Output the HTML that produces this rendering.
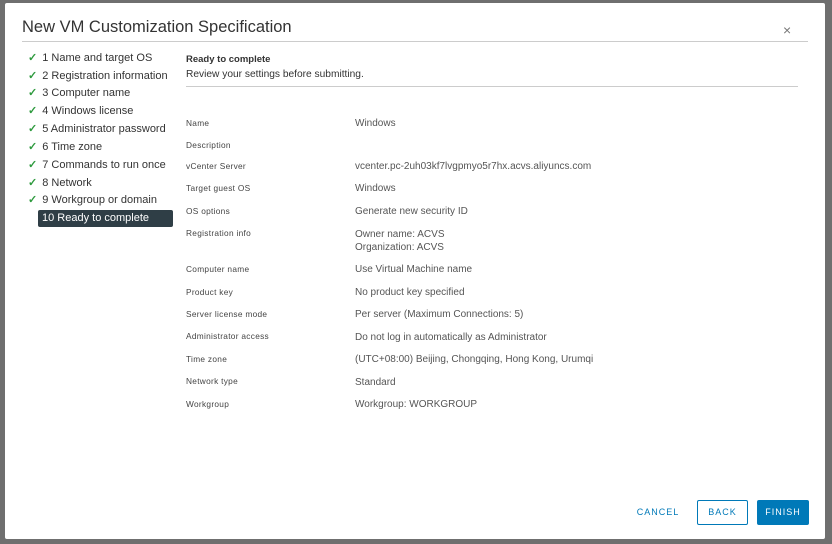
<!DOCTYPE html>
<html><head><style>
*{margin:0;padding:0;box-sizing:border-box}
body{width:832px;height:544px;background:#6f6f6f;font-family:"Liberation Sans",sans-serif;position:relative;overflow:hidden}
#d{position:absolute;left:5px;top:3px;width:820px;height:536px;background:#fff;border-radius:2px}
.a{position:absolute;white-space:nowrap}
.t{left:22px;top:18px;font-size:16.5px;color:#333}
.s{left:28px;font-size:11px;color:#333;line-height:14px}
.s b{color:#2e9a3e;font-weight:bold;margin-right:5px}
.l{left:186px;font-size:8.3px;letter-spacing:.3px;color:#444;line-height:10px}
.v{left:355px;font-size:10px;color:#555;line-height:13px}
.btn{position:absolute;top:500px;height:25px;font-size:9px;letter-spacing:1px;text-align:center;line-height:25px;border-radius:2px}
</style></head><body>
<div id="d"></div>
<div class="a t">New VM Customization Specification</div>
<div class="a" style="left:22px;top:41px;width:786px;height:1px;background:#ccc"></div>
<div class="a" style="left:783px;top:22px;font-size:14px;color:#777">×</div>
<div class="a" style="left:38px;top:210px;width:135px;height:17px;background:#2f3e46;border-radius:2px"></div>
<div class="a s" style="top:51px"><b>✓</b>1 Name and target OS</div>
<div class="a s" style="top:69px"><b>✓</b>2 Registration information</div>
<div class="a s" style="top:86px"><b>✓</b>3 Computer name</div>
<div class="a s" style="top:104px"><b>✓</b>4 Windows license</div>
<div class="a s" style="top:122px"><b>✓</b>5 Administrator password</div>
<div class="a s" style="top:140px"><b>✓</b>6 Time zone</div>
<div class="a s" style="top:158px"><b>✓</b>7 Commands to run once</div>
<div class="a s" style="top:176px"><b>✓</b>8 Network</div>
<div class="a s" style="top:193px"><b>✓</b>9 Workgroup or domain</div>
<div class="a s" style="top:211px;left:42px;color:#fff">10 Ready to complete</div>
<div class="a" style="left:186px;top:54px;font-size:9.5px;font-weight:bold;color:#333">Ready to complete</div>
<div class="a" style="left:186px;top:69px;font-size:10.2px;color:#333">Review your settings before submitting.</div>
<div class="a" style="left:186px;top:86px;width:612px;height:1px;background:#ccc"></div>
<div class="a l" style="top:118px">Name</div><div class="a v" style="top:117px">Windows</div>
<div class="a l" style="top:140px">Description</div>
<div class="a l" style="top:161px">vCenter Server</div><div class="a v" style="top:160px">vcenter.pc-2uh03kf7lvgpmyo5r7hx.acvs.aliyuncs.com</div>
<div class="a l" style="top:183px">Target guest OS</div><div class="a v" style="top:182px">Windows</div>
<div class="a l" style="top:206px">OS options</div><div class="a v" style="top:205px">Generate new security ID</div>
<div class="a l" style="top:228px">Registration info</div><div class="a v" style="top:228px">Owner name: ACVS<br>Organization: ACVS</div>
<div class="a l" style="top:264px">Computer name</div><div class="a v" style="top:263px">Use Virtual Machine name</div>
<div class="a l" style="top:287px">Product key</div><div class="a v" style="top:286px">No product key specified</div>
<div class="a l" style="top:309px">Server license mode</div><div class="a v" style="top:308px">Per server (Maximum Connections: 5)</div>
<div class="a l" style="top:331px">Administrator access</div><div class="a v" style="top:331px">Do not log in automatically as Administrator</div>
<div class="a l" style="top:354px">Time zone</div><div class="a v" style="top:353px">(UTC+08:00) Beijing, Chongqing, Hong Kong, Urumqi</div>
<div class="a l" style="top:376px">Network type</div><div class="a v" style="top:376px">Standard</div>
<div class="a l" style="top:399px">Workgroup</div><div class="a v" style="top:398px">Workgroup: WORKGROUP</div>
<div class="btn" style="left:630px;width:56px;color:#0079b8">CANCEL</div>
<div class="btn" style="left:697px;width:51px;border:1px solid #0079b8;color:#0079b8;line-height:23px">BACK</div>
<div class="btn" style="left:757px;width:52px;background:#0079b8;color:#fff">FINISH</div>
</body></html>
